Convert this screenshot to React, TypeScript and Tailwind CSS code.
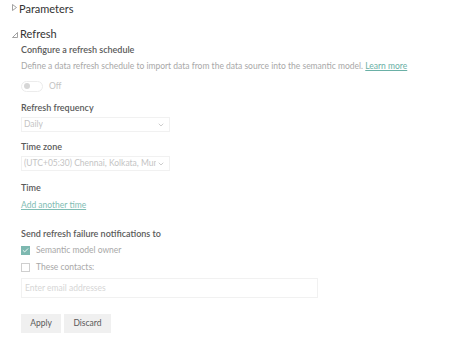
import { ChevronDown, Check } from "lucide-react";

const font = { fontFamily: '"Segoe UI", "Lato", "Open Sans", sans-serif' };

const Label = ({ children }: { children: React.ReactNode }) => (
  <div className="text-[9px] leading-[12px] text-[#5a5a5a] font-semibold">{children}</div>
);

const Select = ({ value }: { value: string }) => (
  <div className="w-[149px] h-[15px] border border-[#f1f1f1] flex items-center justify-between pl-[2px] pr-[4px] text-[8.5px] text-[#c4c4c4]">
    <span className="overflow-hidden whitespace-nowrap">{value}</span>
    <ChevronDown size={8} strokeWidth={1.5} className="text-[#9a9a9a] shrink-0 ml-[1px]" />
  </div>
);

const App = () => {
  return (
    <div className="w-[474px] h-[340px] bg-white relative overflow-hidden" style={font}>
      {/* Parameters (collapsed) */}
      <div className="flex items-center pl-[12px] pt-[3px] h-[16px]">
        <svg width="5" height="7" viewBox="0 0 5 7" className="mr-[2px] mt-[-4px]">
          <path d="M0.5 0.5 L4.5 3.5 L0.5 6.5 Z" fill="none" stroke="#8a8a8a" strokeWidth="0.8" />
        </svg>
        <span className="text-[11px] text-[#333]">Parameters</span>
      </div>

      {/* Refresh (expanded) */}
      <div className="flex items-center pl-[12px] mt-[10px] h-[16px]">
        <svg width="6" height="6" viewBox="0 0 6 6" className="mr-[2px] mt-[2px]">
          <path d="M5.5 0.5 L5.5 5.5 L0.5 5.5 Z" fill="none" stroke="#8a8a8a" strokeWidth="0.8" />
        </svg>
        <span className="text-[11px] text-[#333]">Refresh</span>
      </div>

      <div className="pl-[21px] pt-[2px]">
        <Label>Configure a refresh schedule</Label>
        <div className="mt-[4px] text-[8.5px] leading-[12px] text-[#a8a8a8]">
          Define a data refresh schedule to import data from the data source into the semantic model.{" "}
          <span className="text-[#6ab0a6] underline">Learn more</span>
        </div>

        <div className="flex items-center mt-[8px] h-[12px]">
          <div className="w-[22px] h-[11px] rounded-full border border-[#ececec] flex items-center pl-[2px]">
            <div className="w-[6px] h-[6px] rounded-full bg-[#d6d6d6]" />
          </div>
          <span className="ml-[6px] text-[8.5px] text-[#c4c4c4]">Off</span>
        </div>

        <div className="mt-[10px]">
          <Label>Refresh frequency</Label>
        </div>
        <div className="mt-[3px]">
          <Select value="Daily" />
        </div>

        <div className="mt-[9px]">
          <Label>Time zone</Label>
        </div>
        <div className="mt-[3px]">
          <Select value="(UTC+05:30) Chennai, Kolkata, Mumbai, New Delhi" />
        </div>

        <div className="mt-[11px]">
          <Label>Time</Label>
        </div>
        <div className="mt-[5px] text-[8.5px] leading-[12px] text-[#7fbdb4] underline">Add another time</div>

        <div className="mt-[17px]">
          <Label>Send refresh failure notifications to</Label>
        </div>
        <div className="flex items-center mt-[4px] h-[12px]">
          <div className="w-[9px] h-[9px] bg-[#7db8b0] flex items-center justify-center">
            <Check size={7} strokeWidth={3} className="text-white" />
          </div>
          <span className="ml-[6px] text-[8.5px] text-[#a8a8a8]">Semantic model owner</span>
        </div>
        <div className="flex items-center mt-[5px] h-[12px]">
          <div className="w-[9px] h-[9px] border border-[#cfcfcf]" />
          <span className="ml-[6px] text-[8.5px] text-[#a8a8a8]">These contacts:</span>
        </div>
        <div className="mt-[5px] w-[297px] h-[20px] border border-[#f1f1f1] flex items-center pl-[3px] text-[8.5px] text-[#d6d6d6]">
          Enter email addresses
        </div>

        <div className="flex gap-[3px] mt-[16px]">
          <div className="w-[40px] h-[19px] bg-[#f0f0f0] flex items-center justify-center text-[8.5px] text-[#5a5a5a]">Apply</div>
          <div className="w-[47px] h-[19px] bg-[#f0f0f0] flex items-center justify-center text-[8.5px] text-[#5a5a5a]">Discard</div>
        </div>
      </div>
    </div>
  );
};

export default App;
